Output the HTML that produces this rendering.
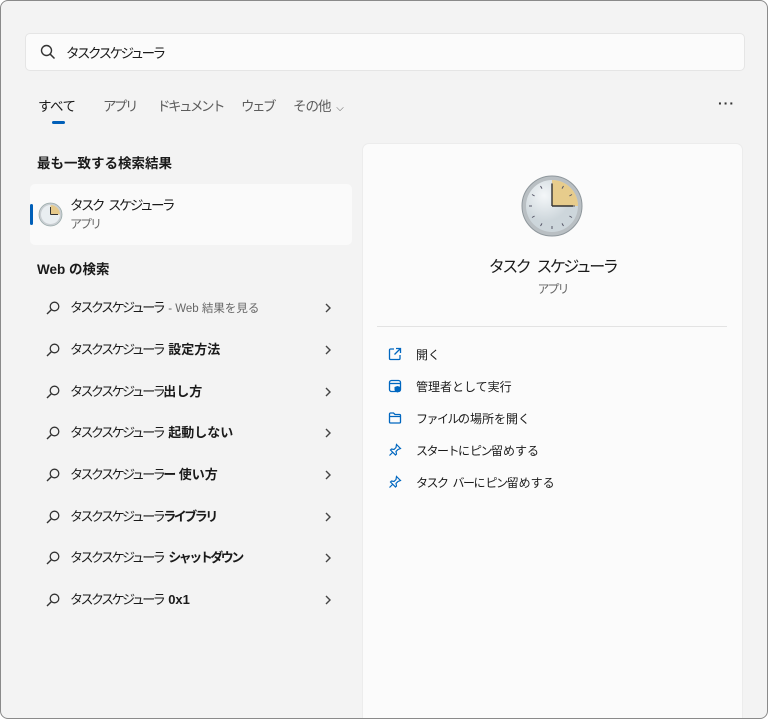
<!DOCTYPE html>
<html><head><meta charset="utf-8"><style>
*{margin:0;padding:0;box-sizing:border-box}
body{width:768px;height:719px;background:#fff;font-family:"Liberation Sans","Noto Sans CJK JP",sans-serif;overflow:hidden;position:relative}
.win{position:absolute;left:0;top:0;width:768px;height:719px;border:1px solid #8a8a8a;border-radius:8px;background:#f3f3f3;overflow:hidden}
.k{letter-spacing:-2.5px}
.k2{letter-spacing:-1.5px}
.sp{display:inline-block;width:5px}
.search{position:absolute;left:24px;top:32px;width:720px;height:38px;background:#fbfbfb;border:1px solid #e5e5e5;border-radius:5px}
.search span{position:absolute;left:40px;top:8px;font-size:13.5px;color:#1a1a1a}
.tab{position:absolute;top:94px;font-size:13.5px;color:#5c5c5c;white-space:nowrap}
.abs{position:absolute}
.h{font-size:13.5px;font-weight:bold;color:#1a1a1a}
.row{position:absolute;left:40px;width:300px;height:40px}
.row .t{position:absolute;left:29px;top:9px;font-size:13px;color:#1a1a1a;white-space:nowrap}
.row .t b{font-weight:bold}
.row .t small{font-size:11.5px;color:#666}
.row svg.s{position:absolute;left:5px;top:13px}
.row .c{position:absolute;left:283px;top:14px}
.panel{position:absolute;left:361px;top:142px;width:381px;height:590px;background:#fbfbfb;border:1px solid #ececec;border-radius:7px}
.act{position:absolute;left:415px;font-size:12px;color:#1a1a1a;white-space:nowrap}
.ai{position:absolute;left:387px}
</style></head><body><div class="win">
<div class="search"><svg class="abs" style="left:14px;top:10px" width="16" height="16" viewBox="0 0 16 16"><circle cx="6.5" cy="6.5" r="5" fill="none" stroke="#333" stroke-width="1.4"/><path d="M10.2 10.2L14.5 14.5" stroke="#333" stroke-width="1.5"/></svg><span class="k">タスクスケジューラ</span></div>
<div class="tab" style="left:37px;color:#1a1a1a;letter-spacing:-0.5px">すべて</div>
<div class="abs" style="left:51px;top:120px;width:13px;height:3px;border-radius:2px;background:#005fb8"></div>
<div class="tab k" style="left:102px">アプリ</div>
<div class="tab k" style="left:156px">ドキュメント</div>
<div class="tab k" style="left:240px">ウェブ</div>
<div class="tab" style="left:292px;letter-spacing:-1px">その他 <span style="font-size:10px;margin-left:3px">⌵</span></div>
<div class="abs" style="left:717px;top:94px;font-size:14px;color:#333;letter-spacing:1px;font-weight:bold">···</div>
<div class="abs h" style="left:36px;top:151px">最も一致する検索結果</div>
<div class="abs" style="left:29px;top:183px;width:322px;height:61px;background:#fafafa;border-radius:5px"></div>
<div class="abs" style="left:29px;top:203px;width:3px;height:21px;border-radius:2px;background:#005fb8"></div>
<svg class="abs" style="left:37px;top:201px" width="25" height="25" viewBox="0 0 50 50"><circle cx="25" cy="25" r="23" fill="#c9ced2" stroke="#9aa" stroke-width="1.5"/><circle cx="25" cy="25" r="19" fill="#e9eef1"/><path d="M25 25V6A19 19 0 0 1 44 25Z" fill="#e6c98a"/><path d="M25 25V10M25 25H40" stroke="#333" stroke-width="2"/></svg>
<div class="abs" style="left:69px;top:193px;font-size:13.5px;color:#1a1a1a;white-space:nowrap"><span class="k">タスク</span><span class="sp"></span><span class="k">スケジューラ</span></div>
<div class="abs k" style="left:69px;top:214px;font-size:12px;color:#666;letter-spacing:-2px">アプリ</div>
<div class="abs h" style="left:36px;top:257px">Web の検索</div>
<div class="row" style="top:287px"><svg class="s" width="14" height="14" viewBox="0 0 14 14"><circle cx="8.5" cy="5.5" r="4.3" fill="none" stroke="#333" stroke-width="1.3"/><path d="M5.3 8.7L1 13" stroke="#333" stroke-width="1.4"/></svg><div class="t"><span class="k">タスクスケジューラ</span><span class="sp"></span><small>- Web 結果を見る</small></div><svg class="c" width="8" height="12" viewBox="0 0 8 12"><path d="M2 2l4 4-4 4" fill="none" stroke="#444" stroke-width="1.4"/></svg></div>
<div class="row" style="top:329px"><svg class="s" width="14" height="14" viewBox="0 0 14 14"><circle cx="8.5" cy="5.5" r="4.3" fill="none" stroke="#333" stroke-width="1.3"/><path d="M5.3 8.7L1 13" stroke="#333" stroke-width="1.4"/></svg><div class="t"><span class="k">タスクスケジューラ</span><span class="sp"></span><b>設定方法</b></div><svg class="c" width="8" height="12" viewBox="0 0 8 12"><path d="M2 2l4 4-4 4" fill="none" stroke="#444" stroke-width="1.4"/></svg></div>
<div class="row" style="top:371px"><svg class="s" width="14" height="14" viewBox="0 0 14 14"><circle cx="8.5" cy="5.5" r="4.3" fill="none" stroke="#333" stroke-width="1.3"/><path d="M5.3 8.7L1 13" stroke="#333" stroke-width="1.4"/></svg><div class="t"><span class="k">タスクスケジューラ</span><b>出し方</b></div><svg class="c" width="8" height="12" viewBox="0 0 8 12"><path d="M2 2l4 4-4 4" fill="none" stroke="#444" stroke-width="1.4"/></svg></div>
<div class="row" style="top:412px"><svg class="s" width="14" height="14" viewBox="0 0 14 14"><circle cx="8.5" cy="5.5" r="4.3" fill="none" stroke="#333" stroke-width="1.3"/><path d="M5.3 8.7L1 13" stroke="#333" stroke-width="1.4"/></svg><div class="t"><span class="k">タスクスケジューラ</span><span class="sp"></span><b>起動しない</b></div><svg class="c" width="8" height="12" viewBox="0 0 8 12"><path d="M2 2l4 4-4 4" fill="none" stroke="#444" stroke-width="1.4"/></svg></div>
<div class="row" style="top:454px"><svg class="s" width="14" height="14" viewBox="0 0 14 14"><circle cx="8.5" cy="5.5" r="4.3" fill="none" stroke="#333" stroke-width="1.3"/><path d="M5.3 8.7L1 13" stroke="#333" stroke-width="1.4"/></svg><div class="t"><span class="k">タスクスケジューラ</span><b><span class="k">ー</span><span class="sp"></span>使い方</b></div><svg class="c" width="8" height="12" viewBox="0 0 8 12"><path d="M2 2l4 4-4 4" fill="none" stroke="#444" stroke-width="1.4"/></svg></div>
<div class="row" style="top:496px"><svg class="s" width="14" height="14" viewBox="0 0 14 14"><circle cx="8.5" cy="5.5" r="4.3" fill="none" stroke="#333" stroke-width="1.3"/><path d="M5.3 8.7L1 13" stroke="#333" stroke-width="1.4"/></svg><div class="t"><span class="k">タスクスケジューラ</span><b class="k">ライブラリ</b></div><svg class="c" width="8" height="12" viewBox="0 0 8 12"><path d="M2 2l4 4-4 4" fill="none" stroke="#444" stroke-width="1.4"/></svg></div>
<div class="row" style="top:537px"><svg class="s" width="14" height="14" viewBox="0 0 14 14"><circle cx="8.5" cy="5.5" r="4.3" fill="none" stroke="#333" stroke-width="1.3"/><path d="M5.3 8.7L1 13" stroke="#333" stroke-width="1.4"/></svg><div class="t"><span class="k">タスクスケジューラ</span><span class="sp"></span><b class="k">シャットダウン</b></div><svg class="c" width="8" height="12" viewBox="0 0 8 12"><path d="M2 2l4 4-4 4" fill="none" stroke="#444" stroke-width="1.4"/></svg></div>
<div class="row" style="top:579px"><svg class="s" width="14" height="14" viewBox="0 0 14 14"><circle cx="8.5" cy="5.5" r="4.3" fill="none" stroke="#333" stroke-width="1.3"/><path d="M5.3 8.7L1 13" stroke="#333" stroke-width="1.4"/></svg><div class="t"><span class="k">タスクスケジューラ</span><span class="sp"></span><b>0x1</b></div><svg class="c" width="8" height="12" viewBox="0 0 8 12"><path d="M2 2l4 4-4 4" fill="none" stroke="#444" stroke-width="1.4"/></svg></div>
<div class="panel"></div>
<svg class="abs" style="left:520px;top:174px" width="62" height="62" viewBox="0 0 62 62"><defs><radialGradient id="g" cx="35%" cy="30%"><stop offset="0" stop-color="#f4f7f9"/><stop offset="1" stop-color="#cdd6db"/></radialGradient></defs><circle cx="31" cy="31" r="30" fill="#b9bfc3" stroke="#8f979c"/><circle cx="31" cy="31" r="26" fill="url(#g)"/><path d="M31 31V5A26 26 0 0 1 57 31Z" fill="#e7cc8c"/><g stroke="#556" stroke-width="1"><path d="M31 8v3M31 51v3M8 31h3M51 31h3M19.5 11l1.5 2.6M42.5 11l-1.5 2.6M11 19.5l2.6 1.5M51 19.5l-2.6 1.5M11 42.5l2.6-1.5M51 42.5l-2.6-1.5M19.5 51l1.5-2.6M42.5 51l-1.5-2.6"/></g><path d="M31 31V9M31 31H52" stroke="#333" stroke-width="1.4"/></svg>
<div class="abs" style="left:361px;width:381px;top:252px;text-align:center;font-size:16px;color:#1a1a1a"><span class="k">タスク</span><span class="sp" style="width:7px"></span><span class="k">スケジューラ</span></div>
<div class="abs" style="left:361px;width:381px;top:279px;text-align:center;font-size:12px;color:#666;letter-spacing:-2px">アプリ</div>
<div class="abs" style="left:376px;top:325px;width:350px;height:1px;background:#e3e3e3"></div>
<svg class="ai" style="top:346px" width="14" height="14" viewBox="0 0 14 14"><path d="M6 2H2.5a1 1 0 0 0-1 1v8.5a1 1 0 0 0 1 1H11a1 1 0 0 0 1-1V8M8 1.5h4.5V6M12.5 1.5L6.5 7.5" fill="none" stroke="#0067c0" stroke-width="1.3"/></svg>
<div class="act" style="top:345px">開く</div>
<svg class="ai" style="top:378px" width="14" height="14" viewBox="0 0 14 14"><rect x="1.5" y="1.5" width="11" height="11" rx="2" fill="none" stroke="#0067c0" stroke-width="1.3"/><path d="M1.5 4.5h11" stroke="#0067c0" stroke-width="1.3"/><path d="M9.5 7l3 1v2.5c0 1.5-1.5 2.5-3 3-1.5-.5-3-1.5-3-3V8z" fill="#0067c0"/></svg>
<div class="act" style="top:377px">管理者として実行</div>
<svg class="ai" style="top:410px" width="14" height="14" viewBox="0 0 14 14"><path d="M1.5 3a1 1 0 0 1 1-1h3l1.5 1.5h4.5a1 1 0 0 1 1 1V11a1 1 0 0 1-1 1h-9a1 1 0 0 1-1-1z M1.5 5.5h11" fill="none" stroke="#0067c0" stroke-width="1.3"/></svg>
<div class="act" style="top:409px"><span class="k2">ファイル</span>の場所を開く</div>
<svg class="ai" style="top:442px" width="14" height="14" viewBox="0 0 14 14"><path d="M8.5 1.5l4 4-2.5 1-2 2 .5 2.5-1 1-5-5 1-1 2.5.5 2-2z M4.5 9.5L1.5 12.5" fill="none" stroke="#0067c0" stroke-width="1.2"/></svg>
<div class="act" style="top:441px"><span class="k2">スタート</span>に<span class="k2">ピン</span>留めする</div>
<svg class="ai" style="top:474px" width="14" height="14" viewBox="0 0 14 14"><path d="M8.5 1.5l4 4-2.5 1-2 2 .5 2.5-1 1-5-5 1-1 2.5.5 2-2z M4.5 9.5L1.5 12.5" fill="none" stroke="#0067c0" stroke-width="1.2"/></svg>
<div class="act" style="top:473px"><span class="k2">タスク</span><span class="sp"></span><span class="k2">バー</span>に<span class="k2">ピン</span>留めする</div>
</div></body></html>
